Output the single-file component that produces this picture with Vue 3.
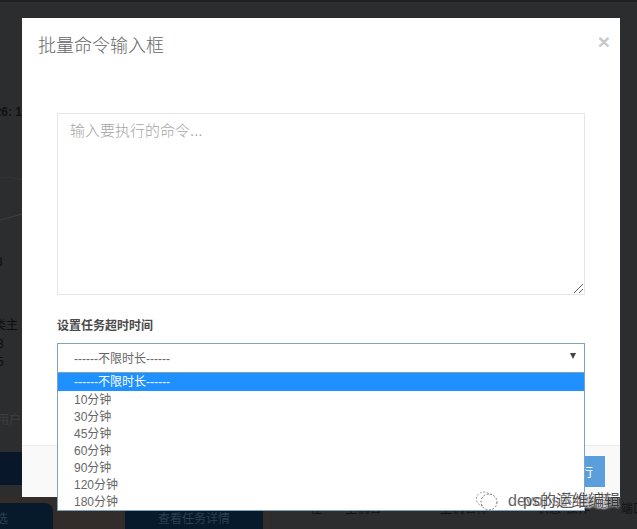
<script setup>
const options = ['------不限时长------', '10分钟', '30分钟', '45分钟', '60分钟', '90分钟', '120分钟', '180分钟']
</script>

<template>
  <div class="page">
    <div class="top-line"></div>
    <aside class="side">
      <div class="side-time"><span>26: 1</span></div>
      <svg class="side-curves" width="22" height="50" viewBox="0 0 22 50">
        <path d="M0 2 Q12 2 22 5" fill="none" stroke="#39343a" stroke-width="1" />
        <path d="M0 45 Q12 42 22 39" fill="none" stroke="#3e4043" stroke-width="1" />
      </svg>
      <div class="side-mark">8</div>
      <div class="side-title">类主</div>
      <div class="side-num">3</div>
      <div class="side-num last">5</div>
      <div class="side-user">用户名</div>
      <div class="side-band"></div>
    </aside>
    <footer class="under">
      <div class="under-btn first">选</div>
      <div class="under-btn second">查看任务详情</div>
      <div class="under-text a">任一</div>
      <div class="under-text b">主机名</div>
      <div class="under-text c">主机名称</div>
      <div class="under-text d">状态</div>
      <div class="under-text e">操作</div>
      <div class="under-text f">端口</div>
    </footer>

    <section class="modal">
      <header class="modal-head">
        <h4 class="modal-title">批量命令输入框</h4>
        <span class="close">×</span>
      </header>
      <div class="modal-body">
        <div class="textarea">
          <span class="placeholder">输入要执行的命令...</span>
          <svg class="grip" width="11" height="11" viewBox="0 0 11 11">
            <path d="M1 10 L10 1 M6 10 L10 6" stroke="#666" stroke-width="1" fill="none" />
          </svg>
        </div>
        <label class="field-label">设置任务超时时间</label>
        <div class="select">
          <div class="select-box">
            <span>------不限时长------</span>
            <span class="caret"></span>
          </div>
          <ul class="menu">
            <li v-for="(o, i) in options" :key="o" :class="['opt', { active: i === 0 }]">{{ o }}</li>
          </ul>
        </div>
      </div>
      <div class="modal-foot">
        <button class="run">执行</button>
      </div>
    </section>

    <div class="watermark">
      <svg class="wm-icon" width="28" height="22" viewBox="0 0 28 22">
        <g fill="none" stroke-width="1" stroke-dasharray="2 1.5">
          <path d="M9 16 A7.5 7 0 1 1 16 5" stroke="#9a9a9a" />
          <circle cx="15" cy="12" r="8" stroke="#777" />
        </g>
      </svg>
      <span class="wm-text">devops的幽魂<span class="wm-over">ps的运维编辑</span></span>
    </div>
  </div>
</template>

<style>
html, body { margin: 0; background: #2b2c2e; }
</style>

<style scoped>
.page {
  position: relative;
  width: 637px;
  height: 529px;
  overflow: hidden;
  background: #2c2d2f;
  font-family: "Liberation Sans", "Noto Sans CJK SC", sans-serif;
  color: #555;
}
.top-line { height: 2px; background: #1f2023; }
.side {
  width: 22px;
  height: 495px;
  overflow: hidden;
  display: flex;
  flex-direction: column;
  color: #0e0e0e;
  font-size: 12px;
  line-height: 18px;
}
.side-time { margin-top: 101px; display: flex; justify-content: flex-end; white-space: nowrap; font-weight: 700; color: #111; }
.side-time span { flex: none; }
.side-curves { display: block; margin-top: 54px; flex: none; }
.side-mark { margin-top: 28px; text-indent: -4px; font-weight: 700; color: #151515; }
.side-title { margin-top: 45px; text-indent: -6px; white-space: nowrap; }
.side-num { text-indent: -3px; margin-top: 1px; }
.side-num.last { margin-top: 0; }
.side-user { margin-top: 40px; text-indent: -3px; white-space: nowrap; color: #3d3e40; }
.side-band { margin-top: 23px; height: 33px; flex: none; background: #08182a; }
.under {
  position: absolute;
  left: 0;
  right: 0;
  bottom: 0;
  height: 34px;
  font-size: 12px;
  color: #101113;
  background: linear-gradient(to right, #322d2b 270px, transparent 270px);
}
.under-btn {
  position: absolute;
  bottom: 0;
  background: #061a2c;
  color: #2d3e4f;
  text-align: center;
}
.under-btn.first { left: 0; width: 53px; height: 26px; border-radius: 0 8px 0 0; line-height: 32px; text-align: left; text-indent: -4px; }
.under-btn.second { left: 125px; width: 138px; height: 21px; line-height: 22px; color: #2f3f50; }
.under-text { position: absolute; top: 7px; white-space: nowrap; line-height: 14px; }
.under-text.a { left: 310px; }
.under-text.b { left: 345px; }
.under-text.c { left: 440px; }
.under-text.d { left: 537px; }
.under-text.e { left: 566px; }
.under-text.f { left: 621px; }

.modal {
  position: absolute;
  left: 22px;
  top: 18px;
  width: 598px;
  height: 479px;
  background: #fff;
  display: flex;
  flex-direction: column;
}
.modal-head {
  height: 55px;
  padding: 18px 16px 0;
  box-sizing: border-box;
  display: flex;
  justify-content: space-between;
}
.modal-title {
  margin: 0;
  font-size: 18px;
  font-weight: 300;
  line-height: 20px;
  color: #666;
}
.close {
  font-family: "Liberation Sans", sans-serif;
  font-size: 21px;
  font-weight: 700;
  line-height: 16px;
  color: #c8c8c8;
  margin-top: -2px;
  margin-right: -6px;
}
.modal-body {
  flex: 1;
  padding: 40px 35px 0;
}
.textarea {
  position: relative;
  height: 182px;
  box-sizing: border-box;
  border: 1px solid #e5e6e7;
  padding: 7px 12px;
  font-size: 15px;
  line-height: 20px;
  color: #a5a5a5;
}
.placeholder { font-weight: 300; }
.grip { position: absolute; right: 0; bottom: 0; }
.field-label {
  display: block;
  margin-top: 24px;
  font-size: 12px;
  font-weight: 700;
  line-height: 14px;
  color: #4a4a4a;
}
.select { position: relative; margin-top: 10px; }
.select-box {
  height: 30px;
  box-sizing: border-box;
  border: 1px solid #7fa3bd;
  padding: 0 8px 0 16px;
  display: flex;
  align-items: center;
  justify-content: space-between;
  font-size: 12px;
  line-height: 16px;
  color: #666;
}
.select-box span:first-child { margin-top: 1px; }
.caret {
  width: 0;
  height: 0;
  border-left: 3px solid transparent;
  border-right: 3px solid transparent;
  border-top: 6px solid #444;
  margin: -4px 0 0;
}
.menu {
  position: absolute;
  left: 0;
  right: 0;
  top: 30px;
  z-index: 2;
  margin: 0;
  padding: 0;
  list-style: none;
  background: #fff;
  border: 1px solid #7fa3bd;
  border-top: 0;
  box-sizing: border-box;
}
.opt {
  height: 17px;
  line-height: 19px;
  padding-left: 16px;
  font-size: 12px;
  color: #666;
}
.opt.active { height: 18px; line-height: 19px; background: #1e90ff; color: #fff; }
.modal-foot {
  height: 52px;
  flex: none;
  box-sizing: border-box;
  border-top: 1px solid #ececec;
  background: #f9f9f9;
  padding: 10px 15px 0;
  display: flex;
  justify-content: flex-end;
}
.run {
  width: 48px;
  height: 31px;
  border: 0;
  padding: 0;
  background: #5a9fdc;
  color: #fff;
  font: 12px "Liberation Sans", "Noto Sans CJK SC", sans-serif;
}
.watermark {
  position: absolute;
  left: 474px;
  top: 490px;
  z-index: 3;
  display: flex;
  align-items: center;
  gap: 6px;
  white-space: nowrap;
}
.wm-icon { display: block; }
.wm-text {
  position: relative;
  display: block;
  width: 112px;
  font-size: 16px;
  line-height: 22px;
  color: #666;
  text-shadow: 0 0 2px #fff, 0 0 2px #fff, 0 0 3px #fff;
}
.wm-over {
  position: absolute;
  right: 0;
  top: 0;
  color: #333;
  opacity: 0.8;
  text-shadow: 0 0 2px #fff, 0 0 2px #fff;
}
</style>
